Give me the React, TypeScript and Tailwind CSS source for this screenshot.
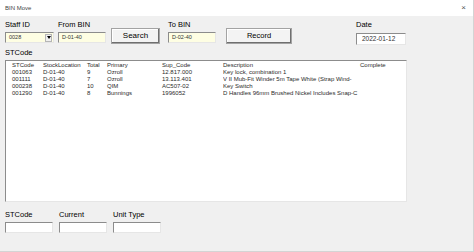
import React from "react";

const rows = [
  { code: "001063", loc: "D-01-40", total: "9", primary: "Ozroll", sup: "12.817.000", desc: "Key lock, combination 1" },
  { code: "001111", loc: "D-01-40", total: "7", primary: "Ozroll", sup: "13.113.401", desc: "V II Mub-Fit Winder 5m Tape White (Strap Wind-" },
  { code: "000238", loc: "D-01-40", total: "10", primary: "QIM", sup: "AC507-02", desc: "Key Switch" },
  { code: "001290", loc: "D-01-40", total: "8", primary: "Bunnings", sup: "1996052", desc: "D Handles 96mm Brushed Nickel Includes Snap-C" },
];

const sunken =
  "border border-t-[#8c8c8c] border-l-[#8c8c8c] border-r-[#e6e6e6] border-b-[#e6e6e6]";
const raised =
  "border border-[#a3a3a3] bg-[#f3f3f3] shadow-[inset_-1px_-1px_0_#6f6f6f,inset_1px_1px_0_#ffffff]";

function Label({ children }: { children: React.ReactNode }) {
  return <div className="h-[9px] text-[7.5px] leading-[9px] text-black">{children}</div>;
}

function Field({ label, value, yellow, w = "w-[48px]" }: { label: string; value?: string; yellow?: boolean; w?: string }) {
  return (
    <div className={`flex flex-col ${w}`}>
      <Label>{label}</Label>
      <div
        className={`mt-[3px] h-[11px] ${sunken} ${yellow ? "bg-[#fefee3]" : "bg-white"} pl-[3px] text-[5.5px] leading-[9px] text-[#333]`}
      >
        {value}
      </div>
    </div>
  );
}

export default function App() {
  return (
    <div
      className="w-[474px] h-[252px] bg-[#f0f0f0] flex flex-col border-r border-b border-[#d4d4d4] overflow-hidden"
      style={{ fontFamily: '"Liberation Sans", Arial, sans-serif' }}
    >
      {/* Title bar */}
      <div className="h-[16px] bg-white flex items-center justify-between px-[5px]">
        <span className="text-[6px] text-[#444]">BIN Move</span>
        <span className="text-[8px] text-[#555] mr-[2px]">×</span>
      </div>

      <div className="flex flex-col px-[5px]">
        {/* Top row */}
        <div className="flex items-start pt-[4px]">
          <div className="flex flex-col w-[49px]">
            <Label>Staff ID</Label>
            <div className={`mt-[3px] h-[11px] ${sunken} bg-[#fefee3] flex items-center justify-between`}>
              <span className="pl-[3px] text-[5.5px] leading-[9px] text-[#333]">0028</span>
              <span className="h-[8px] w-[7px] mr-[1px] bg-[#f0f0f0] border border-[#b5b5b5] flex items-center justify-center">
                <span className="w-0 h-0 border-l-[2px] border-r-[2px] border-t-[3px] border-l-transparent border-r-transparent border-t-black" />
              </span>
            </div>
          </div>
          <div className="ml-[4px]">
            <Field label="From BIN" value="D-01-40" yellow />
          </div>
          <button
            className={`ml-[5px] mt-[8px] w-[49px] h-[16px] ${raised} text-[8px] leading-[14px] text-black`}
          >
            Search
          </button>
          <div className="ml-[8px]">
            <Field label="To BIN" value="D-02-40" yellow />
          </div>
          <button
            className={`ml-[10px] mt-[8px] w-[66px] h-[16px] ${raised} text-[7.5px] leading-[14px] text-black`}
          >
            Record
          </button>
          <div className="ml-[64px] flex flex-col w-[50px]">
            <Label>Date</Label>
            <div className={`mt-[4px] h-[12px] ${sunken} bg-white pl-[5px] text-[6.5px] leading-[10px] text-[#333]`}>
              2022-01-12
            </div>
          </div>
        </div>

        {/* List */}
        <div className="mt-[3px]">
          <Label>STCode</Label>
        </div>
        <div className={`mt-[3px] w-[402px] h-[142px] bg-white ${sunken} border-t-[#7a7a7a]`}>
          <div className="pt-[1px] pl-[6px] text-[6px] leading-[7px] text-[#2b2b2b]">
            <div className="grid grid-cols-[31px_44px_20px_55px_61px_137px_1fr] h-[7px]">
              <span>STCode</span>
              <span>StockLocation</span>
              <span>Total</span>
              <span>Primary</span>
              <span>Sup_Code</span>
              <span>Description</span>
              <span>Complete</span>
            </div>
            {rows.map((r) => (
              <div key={r.code} className="grid grid-cols-[31px_44px_20px_55px_61px_137px_1fr] h-[7px]">
                <span>{r.code}</span>
                <span>{r.loc}</span>
                <span>{r.total}</span>
                <span>{r.primary}</span>
                <span>{r.sup}</span>
                <span className="overflow-hidden whitespace-nowrap pr-[2px]">{r.desc}</span>
                <span />
              </div>
            ))}
          </div>
        </div>

        {/* Bottom row */}
        <div className="flex mt-[8px] gap-[6px]">
          <Field label="STCode" />
          <Field label="Current" />
          <Field label="Unit Type" />
        </div>
      </div>
    </div>
  );
}
